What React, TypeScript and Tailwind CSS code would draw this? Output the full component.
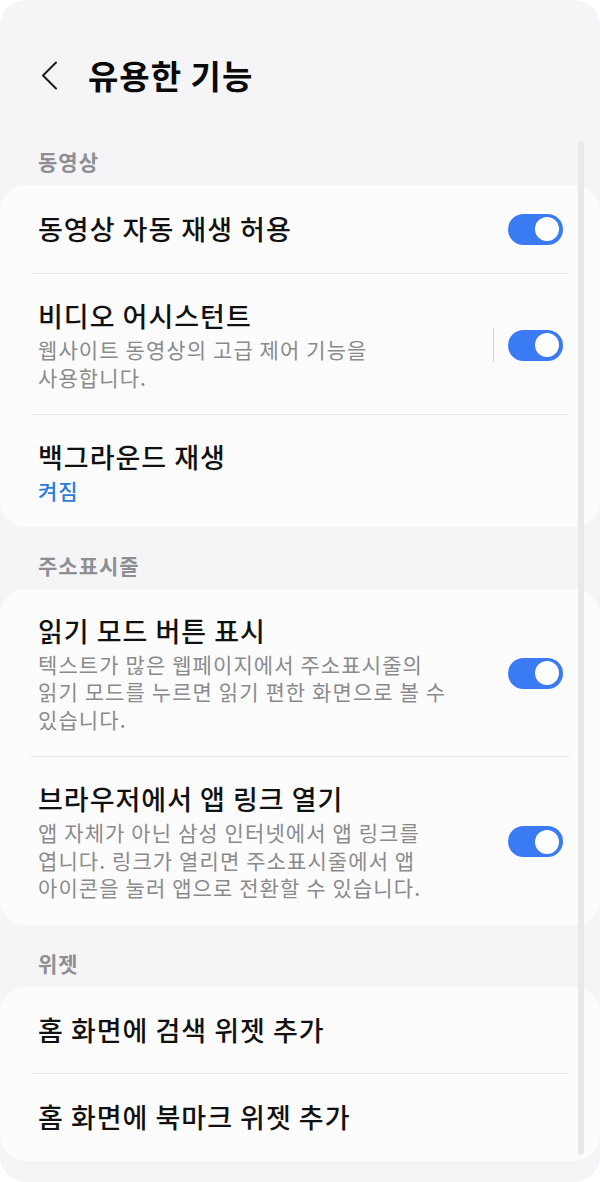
import React from "react";

function Toggle() {
  return (
    <div className="flex h-[31px] w-[55px] shrink-0 items-center justify-end rounded-full bg-[#3a7bf4] px-[4px]">
      <div className="h-[24px] w-[24px] rounded-full bg-white" />
    </div>
  );
}

function Divider() {
  return <div className="mx-[31px] h-px bg-[#e6e6e8]" />;
}

function Row({
  title,
  sub,
  subBlue,
  toggle,
  sep,
  tall,
}: {
  title: string;
  sub?: string[];
  subBlue?: boolean;
  toggle?: boolean;
  sep?: boolean;
  tall?: boolean;
}) {
  return (
    <div
      className={
        sub
          ? subBlue
            ? "flex items-center pl-[38px] pr-[37px] pt-[25px] pb-[22px]"
            : "flex items-center pl-[38px] pr-[37px] pt-[25px] pb-[23px]"
          : tall
          ? "flex min-h-[88px] items-center pl-[38px] pr-[37px]"
          : "flex min-h-[86.5px] items-center pl-[38px] pr-[37px]"
      }
    >
      <div className="flex min-w-0 flex-1 flex-col">
        <div className="text-[27px] leading-[34px] font-medium tracking-[1px] text-[#111111]">
          {title}
        </div>
        {sub && (
          <div
            className={
              subBlue
                ? "mt-[3px] text-[21px] leading-[27.5px] font-medium tracking-[1px] text-[#2a7ce0]"
                : "mt-[3px] text-[21px] leading-[27.5px] tracking-[1.1px] text-[#8a8a8c]"
            }
          >
            {sub.map((l, i) => (
              <div key={i} className="whitespace-nowrap">
                {l}
              </div>
            ))}
          </div>
        )}
      </div>
      {sep && <div className="mr-[14px] h-[34px] w-px bg-[#d6d6d8]" />}
      {toggle && <Toggle />}
    </div>
  );
}

function SectionHeader({ label }: { label: string }) {
  return (
    <div className="pt-[26px] pb-[12px] pl-[38px] text-[21px] leading-[24px] font-bold tracking-[1px] text-[#8e8e93]">
      {label}
    </div>
  );
}

export default function App() {
  return (
    <div className="bg-white font-['Noto_Sans_CJK_KR','Noto_Sans',sans-serif]">
      <div className="relative h-[1182px] overflow-hidden rounded-[26px] bg-[#f5f5f7]">
        {/* Header */}
        <div className="flex h-[123px] items-start pl-[41px] pt-[57px]">
          <div className="flex h-[36px] items-center">
            <svg width="17" height="29" viewBox="0 0 17 29" fill="none">
              <path
                d="M15 1.5 L2 14.5 L15 27.5"
                stroke="#1a1a1a"
                strokeWidth="2"
                strokeLinecap="round"
                strokeLinejoin="round"
              />
            </svg>
            <div className="ml-[30px] text-[33px] leading-[36px] font-bold tracking-[1px] text-[#0a0a0a]">
              유용한 기능
            </div>
          </div>
        </div>

        <SectionHeader label="동영상" />
        <div className="rounded-[26px] bg-[#fcfcfc]">
          <Row title="동영상 자동 재생 허용" toggle tall />
          <Divider />
          <Row
            title="비디오 어시스턴트"
            sub={["웹사이트 동영상의 고급 제어 기능을", "사용합니다."]}
            toggle
            sep
          />
          <Divider />
          <Row title="백그라운드 재생" sub={["켜짐"]} subBlue />
        </div>

        <SectionHeader label="주소표시줄" />
        <div className="rounded-[26px] bg-[#fcfcfc]">
          <Row
            title="읽기 모드 버튼 표시"
            sub={[
              "텍스트가 많은 웹페이지에서 주소표시줄의",
              "읽기 모드를 누르면 읽기 편한 화면으로 볼 수",
              "있습니다.",
            ]}
            toggle
          />
          <Divider />
          <Row
            title="브라우저에서 앱 링크 열기"
            sub={[
              "앱 자체가 아닌 삼성 인터넷에서 앱 링크를",
              "엽니다. 링크가 열리면 주소표시줄에서 앱",
              "아이콘을 눌러 앱으로 전환할 수 있습니다.",
            ]}
            toggle
          />
        </div>

        <SectionHeader label="위젯" />
        <div className="rounded-[26px] bg-[#fcfcfc]">
          <Row title="홈 화면에 검색 위젯 추가" />
          <Divider />
          <Row title="홈 화면에 북마크 위젯 추가" />
        </div>

        {/* Scrollbar */}
        <div className="absolute left-[578px] top-[141px] h-[1014px] w-[6px] rounded-full bg-[#e8e8ea]" />
      </div>
    </div>
  );
}
